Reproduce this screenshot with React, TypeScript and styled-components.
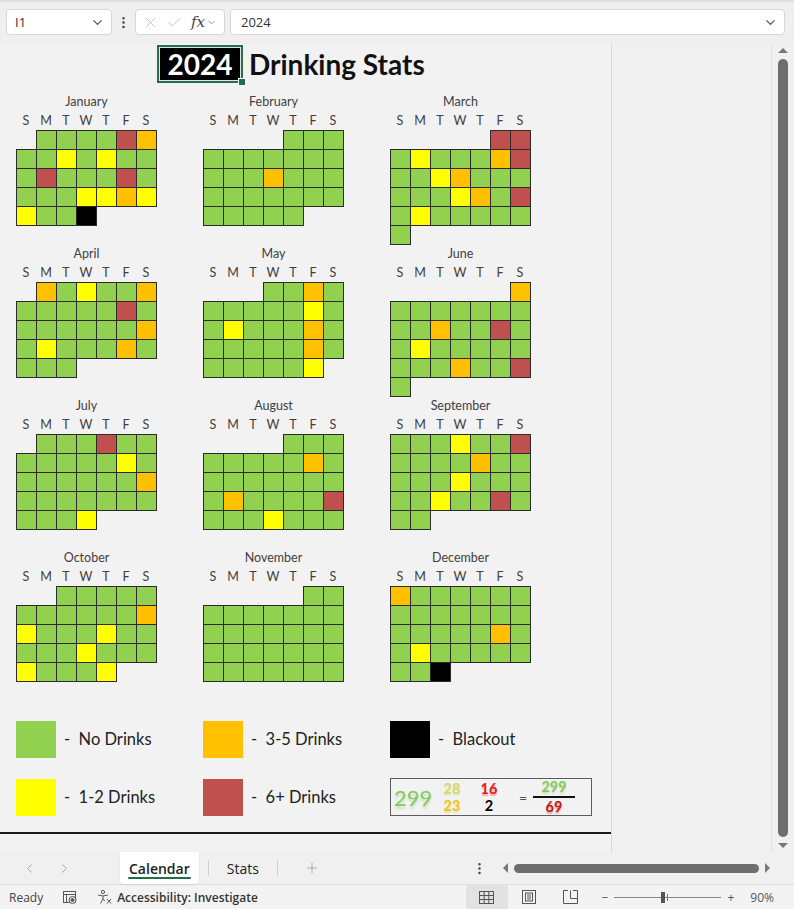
import React from "react";
import styled, { createGlobalStyle } from "styled-components";
import { ChevronDown, X, Check, ChevronLeft, ChevronRight, Plus, EllipsisVertical } from "lucide-react";

type Mark = "g" | "y" | "o" | "r" | "k";

const FILL: Record<Mark, string> = {
  g: "#92d050",
  y: "#ffff00",
  o: "#ffc000",
  r: "#c0504d",
  k: "#000000",
};

// start = weekday of the 1st (0 = Sunday), days = one mark per day
const MONTHS: { name: string; start: number; days: string }[] = [
  { name: "January", start: 1, days: "ggggro" + "ggygygg" + "grgggrg" + "gggyyoy" + "yggk" },
  { name: "February", start: 4, days: "ggg" + "ggggggg" + "gggoggg" + "ggggggg" + "ggggg" },
  { name: "March", start: 5, days: "rr" + "gygggor" + "ggyoggg" + "gggyogr" + "gyggggg" + "g" },
  { name: "April", start: 1, days: "ogyggo" + "gggggrg" + "ggggggo" + "gygggog" + "ggg" },
  { name: "May", start: 3, days: "ggog" + "gggggyg" + "gygggog" + "gggggog" + "gggggy" },
  { name: "June", start: 6, days: "o" + "ggggggg" + "ggoggrg" + "gyggggg" + "gggoggr" + "g" },
  { name: "July", start: 1, days: "gggrgg" + "gggggyg" + "ggggggo" + "ggggggg" + "gggy" },
  { name: "August", start: 4, days: "ggg" + "gggggog" + "ggggggg" + "goggggr" + "gggyggg" },
  { name: "September", start: 0, days: "gggyggr" + "ggggogg" + "gggyggg" + "ggyggrg" + "gg" },
  { name: "October", start: 2, days: "ggggg" + "ggggggo" + "ygggygg" + "gggyggg" + "ygggy" },
  { name: "November", start: 5, days: "gg" + "g".repeat(28) },
  { name: "December", start: 0, days: "ogggggg" + "ggggggg" + "gggggog" + "gyggggg" + "ggk" },
];

const WEEK = ["S", "M", "T", "W", "T", "F", "S"];

const GlobalStyle = createGlobalStyle`
  html, body {
    margin: 0;
    padding: 0;
    background: #f0f0f0;
  }
  body {
    font-family: "Open Sans", "Noto Sans", sans-serif;
    color: #222;
  }
  * { box-sizing: border-box; }
`;

const Window = styled.div`
  width: 794px;
  height: 909px;
  display: flex;
  flex-direction: column;
  background: #f0f0f0;
  overflow: hidden;
`;

/* ---------- formula bar ---------- */

const FormulaBar = styled.div`
  height: 44px;
  display: flex;
  align-items: center;
  padding: 0 9px 0 6px;
  background: #efefef;
  box-shadow: inset 0 3px 3px -2px rgba(0, 0, 0, 0.12);
`;

const Field = styled.div<{ $w?: number }>`
  height: 26px;
  ${(p) => (p.$w ? `width: ${p.$w}px;` : "flex: 1;")}
  background: #fff;
  border: 1px solid #d6d6d6;
  border-radius: 4px;
  display: flex;
  align-items: center;
  padding: 0 6px 0 8px;
  font-size: 13px;
  color: #333;
`;

const FieldText = styled.span`
  flex: 1;
`;

const Dots = styled.div`
  width: 23px;
  display: flex;
  justify-content: center;
  color: #444;
`;

const FxField = styled(Field)`
  margin-right: 5px;
  gap: 7px;
  padding-left: 6px;
  color: #b8b8b8;
`;

const Fx = styled.span`
  font-family: "DejaVu Serif", "Liberation Serif", serif;
  font-style: italic;
  font-size: 15px;
  color: #444;
  margin-left: 1px;
`;

/* ---------- sheet ---------- */

const SheetArea = styled.div`
  height: 808px;
  display: flex;
`;

const Canvas = styled.div`
  width: 612px;
  border-right: 1px solid #d8d8d8;
  background: #f2f2f2;
  font-family: Lato, "Open Sans", sans-serif;
`;

const Spare = styled.div`
  flex: 1;
  background: #f0f0f0;
  border-right: 1px solid #e2e2e2;
`;

const VScroll = styled.div`
  width: 22px;
  display: flex;
  flex-direction: column;
  align-items: center;
  padding: 4px 0 4px;
  background: #f0f0f0;
`;

const Thumb = styled.div<{ $vertical?: boolean }>`
  background: #6e6e6e;
  border-radius: 5px;
  ${(p) => (p.$vertical ? "width: 10px; flex: 1; margin: 6px 0;" : "height: 9px; flex: 1; margin: 0 6px;")}
`;

const Arrow = styled.div<{ $dir: "up" | "down" | "left" | "right" }>`
  width: 0;
  height: 0;
  ${(p) =>
    p.$dir === "up"
      ? "border-left: 5px solid transparent; border-right: 5px solid transparent; border-bottom: 5px solid #777;"
      : p.$dir === "down"
      ? "border-left: 5px solid transparent; border-right: 5px solid transparent; border-top: 5px solid #777;"
      : p.$dir === "left"
      ? "border-top: 5px solid transparent; border-bottom: 5px solid transparent; border-right: 5px solid #777;"
      : "border-top: 5px solid transparent; border-bottom: 5px solid transparent; border-left: 5px solid #777;"}
`;

const TitleRow = styled.div`
  height: 48px;
  display: flex;
  align-items: flex-start;
  padding: 1px 0 0 157px;
  gap: 6px;
`;

const YearCell = styled.div`
  position: relative;
  width: 86px;
  height: 38px;
  background: #000;
  color: #fff;
  font-weight: 700;
  font-size: 28px;
  display: flex;
  align-items: center;
  justify-content: center;
  border: 2px solid #2a6d4a;
  box-shadow: inset 0 0 0 1px #d9e6dd;

  &::after {
    content: "";
    position: absolute;
    right: -5px;
    bottom: -5px;
    width: 6px;
    height: 6px;
    background: #1f6f46;
    border: 1px solid #fff;
  }
`;

const Title = styled.h1`
  margin: 0;
  height: 38px;
  display: flex;
  align-items: center;
  font-size: 28px;
  font-weight: 700;
  color: #111;
`;

const MonthGrid = styled.div`
  display: grid;
  grid-template-columns: repeat(3, 187px);
  grid-auto-rows: 152px;
  padding-left: 16px;
`;

const MonthBlock = styled.div`
  width: 141px;
`;

const MonthName = styled.div`
  height: 19px;
  line-height: 19px;
  text-align: center;
  font-size: 12.5px;
  color: #404040;
`;

const WeekRow = styled.div`
  display: grid;
  grid-template-columns: repeat(7, 20px);
  height: 19px;
  line-height: 19px;
  text-align: center;
  font-size: 12.5px;
  color: #404040;
`;

const Days = styled.div`
  display: grid;
  grid-template-columns: repeat(7, 20px);
  grid-auto-rows: 19px;
`;

const Day = styled.div<{ $mark: Mark; $col?: number }>`
  width: 21px;
  height: 20px;
  border: 1px solid #2b2b2b;
  background: ${(p) => FILL[p.$mark]};
  ${(p) => (p.$col ? `grid-column-start: ${p.$col};` : "")}
`;

const Legend = styled.div`
  display: grid;
  grid-template-columns: repeat(3, 187px);
  row-gap: 20px;
  padding: 20px 0 0 16px;
`;

const LegendItem = styled.div`
  display: flex;
  align-items: center;
  height: 38px;
`;

const Swatch = styled.div<{ $mark: Mark }>`
  flex-shrink: 0;
  width: 40px;
  height: 37px;
  background: ${(p) => FILL[p.$mark]};
`;

const LegendLabel = styled.span`
  margin-left: 8px;
  font-size: 16.5px;
  color: #222;
  white-space: pre;
`;

const FractionBox = styled.div`
  flex-shrink: 0;
  width: 202px;
  height: 38px;
  border: 1px solid #5c5c5c;
  display: flex;
  align-items: center;
  padding-left: 3px;
  font-weight: 700;
`;

const Big = styled.span`
  font-size: 22px;
  font-weight: 400;
  color: #86c85e;
  text-shadow: 0 3px 2px rgba(134, 200, 94, 0.35);
  width: 47px;
`;

const Stack = styled.div<{ $w: number }>`
  width: ${(p) => p.$w}px;
  display: flex;
  flex-direction: column;
  align-items: center;
  font-size: 14.5px;
  line-height: 17px;
`;

const Num = styled.span<{ $c: string }>`
  color: ${(p) => p.$c};
  text-shadow: 0 2px 1px ${(p) => p.$c}55;
`;

const Equals = styled.span`
  font-weight: 400;
  color: #555;
  font-size: 14px;
  width: 14px;
  margin-left: 4px;
`;

const Fraction = styled.div`
  width: 42px;
  display: flex;
  flex-direction: column;
  align-items: center;
  font-size: 14.5px;
  line-height: 16px;

  & > hr {
    width: 42px;
    margin: 1px 0;
    border: none;
    height: 2px;
    background: #111;
  }
`;

const BottomRule = styled.div`
  margin-top: 16px;
  height: 2px;
  background: #1a1a1a;
`;

/* ---------- tabs ---------- */

const TabBar = styled.div`
  height: 32px;
  display: flex;
  align-items: stretch;
  background: #f0f0f0;
  font-size: 14px;
`;

const NavButton = styled.div`
  width: 35px;
  display: flex;
  align-items: center;
  justify-content: center;
  color: #a0a0a0;
`;

const Tab = styled.div<{ $active?: boolean }>`
  position: relative;
  display: flex;
  align-items: center;
  padding: 0 9px;
  color: #222;
  ${(p) =>
    p.$active
      ? `background: #fff; font-weight: 600; border-radius: 0 0 4px 4px; box-shadow: 0 1px 2px rgba(0,0,0,0.08);
         &::after { content: ""; position: absolute; left: 8px; right: 8px; bottom: 5px; height: 2px; border-radius: 1px; background: #1f6f46; }`
      : ""}
`;

const TabSep = styled.div`
  width: 1px;
  margin: 8px 9px;
  background: #cfcfcf;
`;

const AddTab = styled.div`
  width: 50px;
  display: flex;
  align-items: center;
  justify-content: center;
  color: #999;
`;

const TabDots = styled.div`
  display: flex;
  align-items: center;
  color: #444;
  margin-left: auto;
  margin-right: 12px;
`;

const HScroll = styled.div`
  width: 275px;
  margin-right: 20px;
  display: flex;
  align-items: center;
  padding: 0 4px;
`;

/* ---------- status bar ---------- */

const StatusBar = styled.div`
  height: 25px;
  display: flex;
  align-items: stretch;
  border-top: 1px solid #e0e0e0;
  background: #f3f3f3;
  font-size: 12px;
  color: #444;
`;

const StatusItem = styled.div<{ $bold?: boolean }>`
  display: flex;
  align-items: center;
  gap: 5px;
  padding: 0 9px;
  ${(p) => (p.$bold ? "font-weight: 600; color: #333;" : "")}
`;

const Gap = styled.div`
  flex: 1;
`;

const ViewButton = styled.div<{ $on?: boolean }>`
  width: 42px;
  display: flex;
  align-items: center;
  justify-content: center;
  color: #555;
  background: ${(p) => (p.$on ? "#e2e2e2" : "transparent")};
`;

const Zoom = styled.div`
  display: flex;
  align-items: center;
  gap: 6px;
  padding: 0 20px 0 10px;
  color: #555;
`;

const ZoomValue = styled.span`
  margin-left: 10px;
`;

const Slider = styled.div`
  position: relative;
  width: 107px;
  height: 1px;
  background: #888;

  &::before {
    content: "";
    position: absolute;
    left: 47px;
    top: -5px;
    width: 4px;
    height: 11px;
    background: #555;
  }
  &::after {
    content: "";
    position: absolute;
    left: 53px;
    top: -3px;
    width: 1px;
    height: 7px;
    background: #777;
  }
`;

const Month = ({ name, start, days }: { name: string; start: number; days: string }) => (
  <MonthBlock>
    <MonthName>{name}</MonthName>
    <WeekRow>
      {WEEK.map((d, i) => (
        <span key={i}>{d}</span>
      ))}
    </WeekRow>
    <Days>
      {days.split("").map((m, i) => (
        <Day key={i} $mark={m as Mark} $col={i === 0 ? start + 1 : undefined} />
      ))}
    </Days>
  </MonthBlock>
);

const MacroIcon = () => (
  <svg width="16" height="15" viewBox="0 0 16 15" fill="none" stroke="#555" strokeWidth="1">
    <rect x="1.5" y="1.5" width="12" height="11" />
    <line x1="1.5" y1="4.5" x2="13.5" y2="4.5" />
    <line x1="4.5" y1="4.5" x2="4.5" y2="12.5" />
    <circle cx="10.5" cy="10" r="3.5" fill="#f3f3f3" />
    <circle cx="10.5" cy="10" r="1.5" fill="#555" />
  </svg>
);

const AccessIcon = () => (
  <svg width="16" height="16" viewBox="0 0 16 16" fill="none" stroke="#555" strokeWidth="1">
    <circle cx="7" cy="3" r="1.6" />
    <path d="M2 6 L7 7 L12 6 M7 7 V10 L4.5 14.5 M7 10 L9 12" />
    <path d="M11 10 L15 14.5 M15 10 L11 14.5" />
  </svg>
);

const GridIcon = () => (
  <svg width="15" height="13" viewBox="0 0 15 13" fill="none" stroke="#555" strokeWidth="1">
    <rect x="0.5" y="0.5" width="14" height="12" />
    <path d="M5.2 0.5 V12.5 M9.8 0.5 V12.5 M0.5 4.5 H14.5 M0.5 8.5 H14.5" />
  </svg>
);

const PageIcon = () => (
  <svg width="14" height="14" viewBox="0 0 14 14" fill="none" stroke="#555" strokeWidth="1">
    <rect x="0.5" y="0.5" width="13" height="13" />
    <rect x="3.5" y="3" width="7" height="8" />
    <path d="M5 5 H9 M5 7 H9 M5 9 H9" />
  </svg>
);

const BreakIcon = () => (
  <svg width="15" height="14" viewBox="0 0 15 14" fill="none" stroke="#555" strokeWidth="1">
    <path d="M0.5 0.5 V13.5 H14.5 V0.5 M0.5 0.5 H5 M10 0.5 H14.5 M7.5 0.5 V8.5 H14.5" />
  </svg>
);

export default function App() {
  return (
    <>
      <GlobalStyle />
      <Window>
        <FormulaBar>
          <Field $w={106}>
            <FieldText>I1</FieldText>
            <ChevronDown size={15} color="#555" />
          </Field>
          <Dots>
            <EllipsisVertical size={15} />
          </Dots>
          <FxField $w={90}>
            <X size={17} strokeWidth={1.2} />
            <Check size={17} strokeWidth={1.2} />
            <Fx>fx</Fx>
            <ChevronDown size={11} color="#888" style={{ marginLeft: -6 }} />
          </FxField>
          <Field>
            <FieldText style={{ paddingLeft: 2 }}>2024</FieldText>
            <ChevronDown size={15} color="#555" />
          </Field>
        </FormulaBar>

        <SheetArea>
          <Canvas>
            <TitleRow>
              <YearCell>2024</YearCell>
              <Title>Drinking Stats</Title>
            </TitleRow>
            <MonthGrid>
              {MONTHS.map((m) => (
                <Month key={m.name} {...m} />
              ))}
            </MonthGrid>
            <Legend>
              <LegendItem>
                <Swatch $mark="g" />
                <LegendLabel>-  No Drinks</LegendLabel>
              </LegendItem>
              <LegendItem>
                <Swatch $mark="o" />
                <LegendLabel>-  3-5 Drinks</LegendLabel>
              </LegendItem>
              <LegendItem>
                <Swatch $mark="k" />
                <LegendLabel>-  Blackout</LegendLabel>
              </LegendItem>
              <LegendItem>
                <Swatch $mark="y" />
                <LegendLabel>-  1-2 Drinks</LegendLabel>
              </LegendItem>
              <LegendItem>
                <Swatch $mark="r" />
                <LegendLabel>-  6+ Drinks</LegendLabel>
              </LegendItem>
              <LegendItem>
                <FractionBox>
                  <Big>299</Big>
                  <Stack $w={22}>
                    <Num $c="#d6d66e">28</Num>
                    <Num $c="#f2c21c">23</Num>
                  </Stack>
                  <Stack $w={52}>
                    <Num $c="#e01b1b">16</Num>
                    <Num $c="#000">2</Num>
                  </Stack>
                  <Equals>=</Equals>
                  <Fraction>
                    <Num $c="#86c85e">299</Num>
                    <hr />
                    <Num $c="#c41818">69</Num>
                  </Fraction>
                </FractionBox>
              </LegendItem>
            </Legend>
            <BottomRule />
          </Canvas>
          <Spare />
          <VScroll>
            <Arrow $dir="up" />
            <Thumb $vertical />
            <Arrow $dir="down" />
          </VScroll>
        </SheetArea>

        <TabBar>
          <NavButton style={{ marginLeft: 12 }}>
            <ChevronLeft size={15} strokeWidth={1.5} />
          </NavButton>
          <NavButton>
            <ChevronRight size={15} strokeWidth={1.5} />
          </NavButton>
          <Tab $active style={{ marginLeft: 38 }}>Calendar</Tab>
          <TabSep />
          <Tab>Stats</Tab>
          <TabSep />
          <AddTab>
            <Plus size={16} strokeWidth={1.2} />
          </AddTab>
          <TabDots>
            <EllipsisVertical size={15} />
          </TabDots>
          <HScroll>
            <Arrow $dir="left" />
            <Thumb />
            <Arrow $dir="right" />
          </HScroll>
        </TabBar>

        <StatusBar>
          <StatusItem>Ready</StatusItem>
          <StatusItem style={{ paddingLeft: 10 }}>
            <MacroIcon />
          </StatusItem>
          <StatusItem $bold>
            <AccessIcon />
            Accessibility: Investigate
          </StatusItem>
          <Gap />
          <ViewButton $on>
            <GridIcon />
          </ViewButton>
          <ViewButton>
            <PageIcon />
          </ViewButton>
          <ViewButton>
            <BreakIcon />
          </ViewButton>
          <Zoom>
            <span>−</span>
            <Slider />
            <span>+</span>
            <ZoomValue>90%</ZoomValue>
          </Zoom>
        </StatusBar>
      </Window>
    </>
  );
}
